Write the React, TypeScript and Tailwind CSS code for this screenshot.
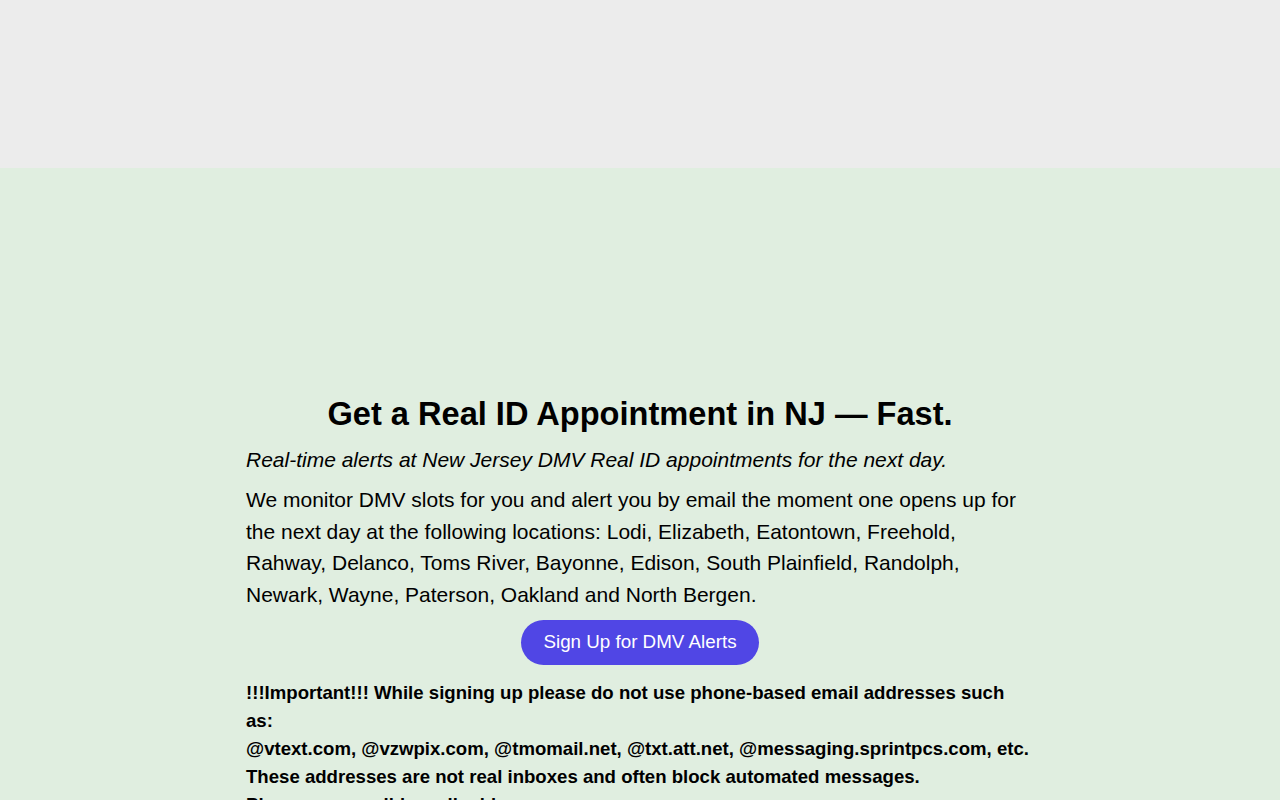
export default function App() {
  return (
    <div className="min-h-screen bg-[#e0eee0] font-['Liberation_Sans',Arial,sans-serif] text-black">
      {/* top bar */}
      <header className="h-[168px] bg-[#ececec]" />

      <main className="mx-auto w-[788px] pt-[227px] pb-16">
        <h1 className="text-center text-[32.6px] font-bold leading-[38px]">
          Get a Real ID Appointment in NJ — Fast.
        </h1>
        <p className="mt-[12px] text-[21px] italic leading-[30px]">
          Real-time alerts at New Jersey DMV Real ID appointments for the next day.
        </p>
        <p className="mt-[9px] text-[21px] leading-[31.5px]">
          We monitor DMV slots for you and alert you by email the moment one opens up for the next
          day at the following locations: Lodi, Elizabeth, Eatontown, Freehold, Rahway, Delanco,
          Toms River, Bayonne, Edison, South Plainfield, Randolph, Newark, Wayne, Paterson, Oakland
          and North Bergen.
        </p>
        <div className="mt-[10px] flex justify-center">
          <button className="h-[45px] w-[238px] rounded-full bg-[#5046e5] text-[18.8px] text-white">
            Sign Up for DMV Alerts
          </button>
        </div>
        <div className="mt-[14px] text-[18.6px] font-bold leading-[28px]">
          <p>!!!Important!!! While signing up please do not use phone-based email addresses such as:</p>
          <p>@vtext.com, @vzwpix.com, @tmomail.net, @txt.att.net, @messaging.sprintpcs.com, etc.</p>
          <p>These addresses are not real inboxes and often block automated messages.</p>
          <p>Please use a valid email address.</p>
        </div>
      </main>
    </div>
  );
}
